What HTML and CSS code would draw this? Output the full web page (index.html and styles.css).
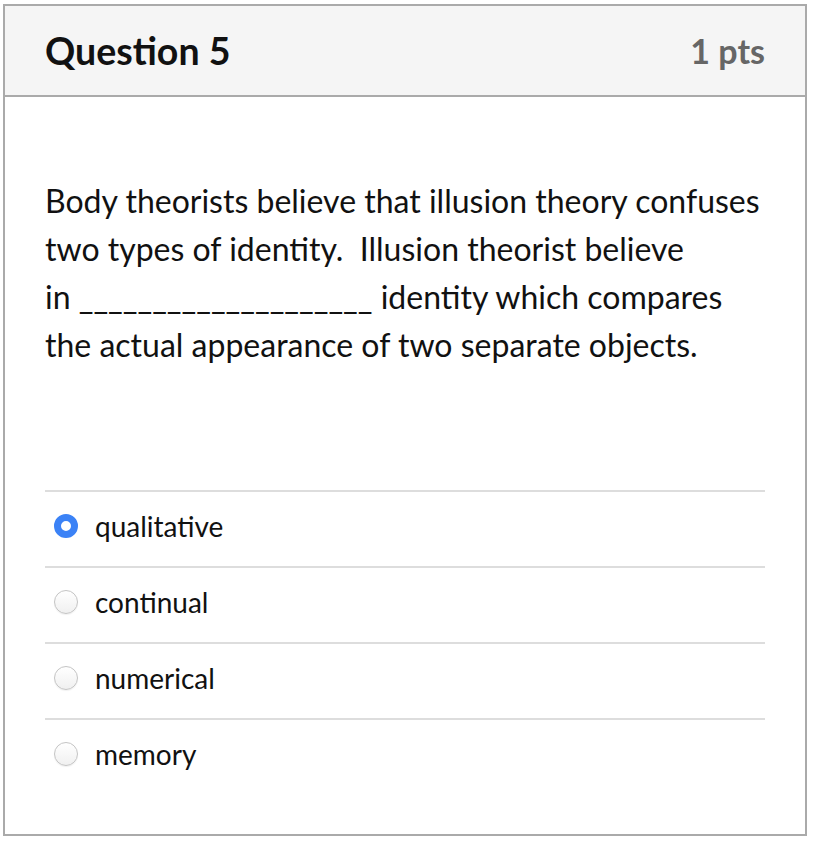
FILE: index.html
```html
<!DOCTYPE html>
<html>
<head>
<meta charset="utf-8">
<link rel="stylesheet" href="styles.css">
</head>
<body>
<div class="card">
  <div class="header">
    <h2 class="title">Question 5</h2>
    <div class="pts">1 pts</div>
  </div>
  <div class="content">
    <p class="question">Body theorists believe that illusion theory confuses two types of identity.&nbsp; Illusion theorist believe in&nbsp;____________________ identity which compares the actual appearance of two separate objects.</p>
    <div class="answers">
      <label class="answer"><span class="radio checked"></span><span class="label">qualitative</span></label>
      <label class="answer"><span class="radio"></span><span class="label">continual</span></label>
      <label class="answer"><span class="radio"></span><span class="label">numerical</span></label>
      <label class="answer"><span class="radio"></span><span class="label">memory</span></label>
    </div>
  </div>
</div>
</body>
</html>
```
FILE: styles.css
```css
html, body {
  margin: 0;
  padding: 0;
  background: #fff;
}
body {
  font-family: Lato, "Open Sans", sans-serif;
  color: #111;
}
.card {
  margin: 4px 0 0 3px;
  width: 800px;
  border: 2px solid #aaa;
}
.header {
  height: 89px;
  background: #f5f5f5;
  border-bottom: 2px solid #aaa;
  display: flex;
  align-items: center;
  justify-content: space-between;
  padding: 0 40px 0 40px;
}
.title {
  margin: 0;
  font-size: 37.5px;
  font-weight: 700;
  color: #111;
}
.pts {
  font-size: 34px;
  font-weight: 700;
  color: #666;
}
.content {
  padding: 80px 40px 40px 40px;
}
.question {
  margin: 0;
  font-size: 32px;
  line-height: 48px;
  color: #111;
}
.answers {
  margin-top: 121px;
}
.answer {
  display: flex;
  align-items: center;
  box-sizing: border-box;
  height: 76px;
  padding-bottom: 6px;
  border-top: 2px solid #ddd;
}
.radio {
  width: 24px;
  height: 24px;
  box-sizing: border-box;
  border-radius: 50%;
  border: 1px solid #c4c4c4;
  background: linear-gradient(#fff, #f0f0f0);
  box-shadow: 0 1px 1px rgba(0,0,0,0.06);
  margin: 0 17px 0 9px;
  flex-shrink: 0;
}
.radio.checked {
  border: 7px solid #3b82f6;
  background: #fff;
  box-shadow: none;
}
.label {
  font-size: 28px;
  color: #111;
}
```
